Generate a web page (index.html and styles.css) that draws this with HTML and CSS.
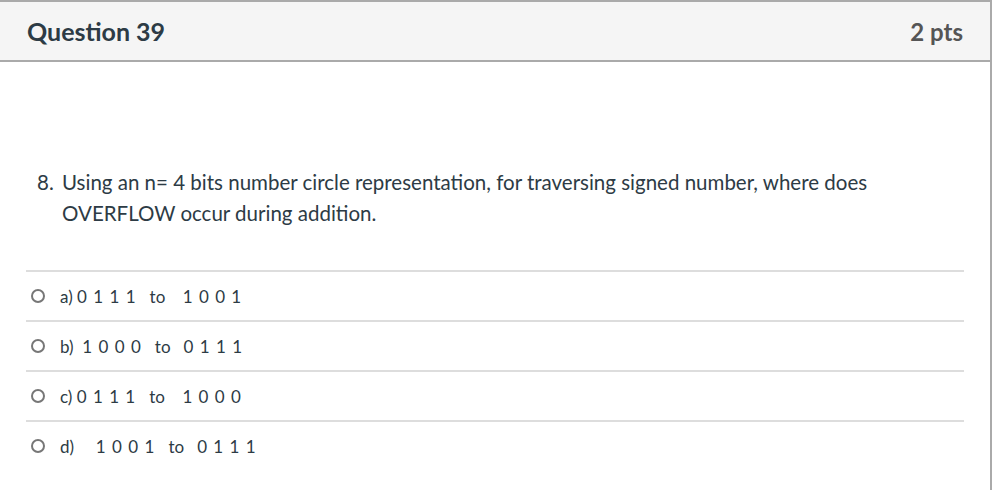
FILE: index.html
```html
<!DOCTYPE html>
<html>
<head>
<meta charset="utf-8">
<link rel="stylesheet" href="styles.css">
</head>
<body>
<div class="quiz-question">
  <div class="question-header">
    <span class="question-title">Question 39</span>
    <span class="question-points">2 pts</span>
  </div>
  <div class="question-body">
    <p class="question-text"><span class="qnum">8.</span>Using an n= 4 bits number circle representation, for traversing signed number, where does OVERFLOW occur during addition.</p>
    <div class="answers">
      <label class="answer"><span class="radio"></span><span class="answer-text">a) <span class="bits">0 1 1 1</span>   to    <span class="bits">1 0 0 1</span></span></label>
      <label class="answer"><span class="radio"></span><span class="answer-text">b)  <span class="bits">1 0 0 0</span>   to   <span class="bits">0 1 1 1</span></span></label>
      <label class="answer"><span class="radio"></span><span class="answer-text">c) <span class="bits">0 1 1 1</span>   to    <span class="bits">1 0 0 0</span></span></label>
      <label class="answer"><span class="radio"></span><span class="answer-text">d)     <span class="bits">1 0 0 1</span>   to   <span class="bits">0 1 1 1</span></span></label>
    </div>
  </div>
</div>
</body>
</html>
```
FILE: styles.css
```css
html, body {
  margin: 0;
  padding: 0;
  background: #ffffff;
}
body {
  font-family: Lato, "Open Sans", "Liberation Sans", sans-serif;
  color: #2d3b45;
  width: 994px;
  height: 490px;
  overflow: hidden;
}
.quiz-question {
  width: 990px;
  height: 488px;
  border-top: 2px solid #aaaaaa;
  border-right: 2px solid #aaaaaa;
}
.question-header {
  display: flex;
  justify-content: space-between;
  align-items: center;
  height: 58px;
  padding: 0 27px;
  background: #f5f5f5;
  border-bottom: 2px solid #aaaaaa;
}
.question-title {
  font-weight: 700;
  font-size: 25px;
  color: #2d3b45;
}
.question-points {
  font-weight: 700;
  font-size: 24px;
  color: #555555;
}
.question-body {
  padding: 0 26px;
}
.question-text {
  margin: 105px 0 41px 0;
  padding-left: 36px;
  text-indent: -25px;
  font-size: 20.5px;
  line-height: 31px;
}
.qnum {
  display: inline-block;
  text-indent: 0;
  width: 25px;
}
.answers {
  display: flex;
  flex-direction: column;
}
.answer {
  display: flex;
  align-items: center;
  height: 48px;
  border-top: 2px solid #dddddd;
  font-size: 17px;
}
.radio {
  box-sizing: border-box;
  width: 14px;
  height: 14px;
  margin-left: 5px;
  margin-right: 15px;
  border: 2px solid #777777;
  border-radius: 50%;
  flex: none;
}
.answer-text {
  white-space: pre;
}
.bits {
  letter-spacing: 1px;
}
```
